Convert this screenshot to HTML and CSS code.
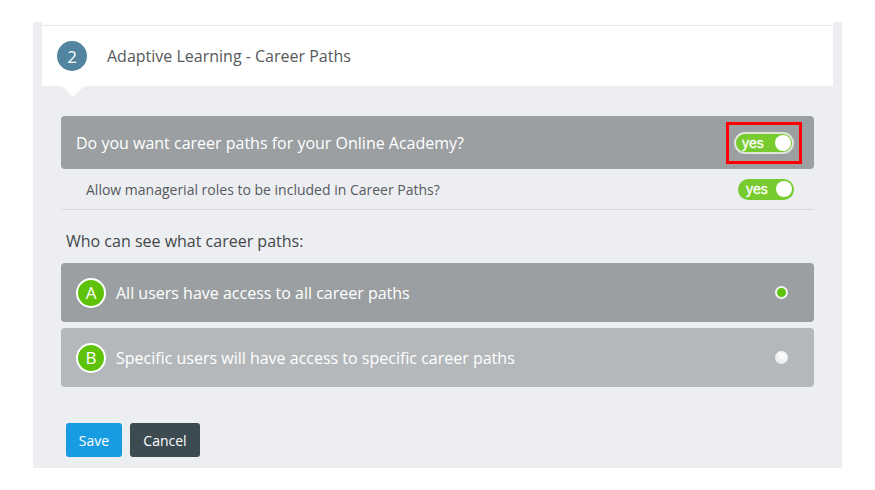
FILE: index.html
```html
<!DOCTYPE html>
<html>
<head>
<meta charset="utf-8">
<link rel="stylesheet" href="styles.css">
</head>
<body>
<div class="panel">
  <div class="header">
    <div class="header-inner">
      <span class="step">2</span>
      <span class="title">Adaptive Learning - Career Paths</span>
    </div>
    <span class="pointer"></span>
  </div>
  <div class="content">
    <div class="question">
      <span class="q-text">Do you want career paths for your Online Academy?</span>
      <span class="highlight"><span class="toggle toggle-bordered"><span class="t-label">yes</span><span class="knob"></span></span></span>
    </div>
    <div class="subrow">
      <span class="sub-text">Allow managerial roles to be included in Career Paths?</span>
      <span class="toggle"><span class="t-label">yes</span><span class="knob"></span></span>
    </div>
    <div class="who">Who can see what career paths:</div>
    <div class="option option-selected">
      <span class="letter">A</span>
      <span class="o-text">All users have access to all career paths</span>
      <span class="radio radio-on"></span>
    </div>
    <div class="option option-plain">
      <span class="letter">B</span>
      <span class="o-text">Specific users will have access to specific career paths</span>
      <span class="radio"></span>
    </div>
    <div class="buttons">
      <button class="btn btn-save">Save</button>
      <button class="btn btn-cancel">Cancel</button>
    </div>
  </div>
</div>
</body>
</html>
```
FILE: styles.css
```css
html, body {
  margin: 0;
  padding: 0;
  background: #ffffff;
  font-family: "Open Sans", "Noto Sans", sans-serif;
}
.panel {
  margin: 22px 0 0 33px;
  width: 809px;
  height: 446px;
  background: #edeef2;
  padding: 0 9px;
  box-sizing: border-box;
}
.header {
  position: relative;
  background: #ffffff;
  padding-top: 3px;
  height: 64px;
  box-sizing: border-box;
}
.header-inner {
  border-top: 1px solid #e8e9ec;
  height: 60px;
  display: flex;
  align-items: center;
  padding-left: 15px;
}
.step {
  width: 30px;
  height: 30px;
  border-radius: 50%;
  background: #50849f;
  color: #ffffff;
  font-size: 17px;
  display: flex;
  align-items: center;
  justify-content: center;
}
.title {
  margin-left: 20px;
  font-size: 16px;
  color: #56595c;
}
.pointer {
  position: absolute;
  left: 20px;
  top: 64px;
  width: 0;
  height: 0;
  border-left: 11px solid transparent;
  border-right: 11px solid transparent;
  border-top: 11px solid #ffffff;
}
.content {
  padding: 30px 19px 0 19px;
}
.question {
  height: 53px;
  background: #9b9fa2;
  border-radius: 4px;
  display: flex;
  align-items: center;
  padding: 0 12px 0 15px;
  justify-content: space-between;
}
.q-text {
  color: #ffffff;
  font-size: 16px;
}
.highlight {
  border: 3px solid #ff0000;
  width: 70px;
  height: 36px;
  display: flex;
  align-items: center;
  justify-content: center;
}
.toggle {
  position: relative;
  width: 56px;
  height: 21px;
  border-radius: 11px;
  background: #77cb2e;
  display: inline-flex;
  align-items: center;
  box-sizing: border-box;
}
.toggle-bordered {
  width: 60px;
  height: 22px;
  border: 2px solid #dfe6d7;
}
.t-label {
  font-family: "Liberation Sans", Arial, sans-serif;
  font-size: 14px;
  font-weight: normal;
  color: #ffffff;
  margin-left: 8px;
  -webkit-text-stroke: 0.3px #ffffff;
}
.toggle-bordered .t-label {
  margin-left: 6px;
}
.knob {
  position: absolute;
  right: 2px;
  top: 50%;
  margin-top: -8px;
  width: 16px;
  height: 16px;
  border-radius: 50%;
  background: #ffffff;
}
.toggle-bordered .knob {
  right: 1px;
}
.subrow {
  height: 40px;
  display: flex;
  align-items: center;
  justify-content: space-between;
  padding: 0 20px 0 25px;
  border-bottom: 1px solid #d8d9dc;
}
.sub-text {
  font-size: 14px;
  color: #555a5e;
}
.who {
  font-size: 16px;
  color: #43474a;
  padding: 20px 0 0 5px;
  height: 33px;
}
.option {
  height: 59px;
  border-radius: 4px;
  display: flex;
  align-items: center;
  padding: 0 26px 0 15px;
  margin-bottom: 6px;
}
.option-selected {
  background: #9b9fa2;
}
.option-plain {
  background: #b4b8bb;
}
.letter {
  width: 26px;
  height: 26px;
  border-radius: 50%;
  border: 2px solid #ffffff;
  background: #5ec20a;
  color: #ffffff;
  font-size: 17px;
  display: flex;
  align-items: center;
  justify-content: center;
}
.o-text {
  color: #ffffff;
  font-size: 16px;
  margin-left: 10px;
  flex: 1;
}
.radio {
  width: 13px;
  height: 13px;
  border-radius: 50%;
  background: radial-gradient(circle at 50% 35%, #ffffff 0%, #eeeeee 65%, #dedede 100%);
  box-sizing: border-box;
}
.radio-on {
  background: #5ec20a;
  border: 2px solid #f4f4f4;
}
.buttons {
  display: flex;
  gap: 8px;
  padding: 30px 0 0 5px;
}
.btn {
  height: 34px;
  border: none;
  border-radius: 3px;
  color: #ffffff;
  font-family: "Open Sans", "Noto Sans", sans-serif;
  font-size: 14px;
  padding: 0;
}
.btn-save {
  width: 56px;
  background: #179ce3;
}
.btn-cancel {
  width: 70px;
  background: #3c4a51;
}
```
